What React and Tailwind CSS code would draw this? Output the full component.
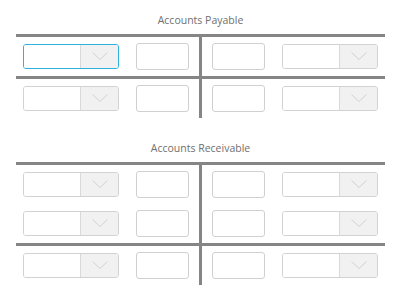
const font = { fontFamily: '"Open Sans", "Liberation Sans", sans-serif' };

const Chevron = () => (
  <svg width="16" height="8" viewBox="0 0 16 8" fill="none">
    <path d="M0.5 0.5 L8 7.5 L15.5 0.5" stroke="#d3d3d3" strokeWidth="1" />
  </svg>
);

const Select = ({ active }) => (
  <div
    className={`w-[96px] h-[25px] flex rounded-[3px] border overflow-hidden ${
      active ? 'border-[#2ab4dc]' : 'border-[#d2d2d2]'
    }`}
  >
    <div className="flex-1 bg-white" />
    <div className="w-[38px] bg-[#f1f1f1] border-l border-[#d9d9d9] flex items-center justify-center pb-[1px]">
      <Chevron />
    </div>
  </div>
);

const Input = () => (
  <div className="w-[53px] h-[27px] rounded-[3px] border border-[#d0d0d0] bg-white" />
);

const Row = ({ active }) => (
  <div className="flex h-[39px]">
    <div className="w-[183px] flex items-center gap-[17px] pl-[7px]">
      <Select active={active} />
      <Input />
    </div>
    <div className="w-[3px] bg-[#858585]" />
    <div className="w-[183px] flex items-center gap-[17px] pl-[10px]">
      <Input />
      <Select />
    </div>
  </div>
);

const Rule = () => <div className="h-[3px] bg-[#858585]" />;

const Section = ({ title, children, className }) => (
  <div className={className}>
    <div className="text-center text-[10.5px] leading-[14px] text-[#6f6f6f] mb-[7px]">{title}</div>
    <Rule />
    {children}
  </div>
);

export default function App() {
  return (
    <div className="w-[404px] h-[304px] bg-white pt-[13px] pl-[16px]" style={font}>
      <div className="w-[369px]">
        <Section title="Accounts Payable">
          <Row active />
          <Rule />
          <Row />
        </Section>

        <Section title="Accounts Receivable" className="mt-[23px]">
          <Row />
          <Row />
          <Rule />
          <Row />
        </Section>
      </div>
    </div>
  );
}
